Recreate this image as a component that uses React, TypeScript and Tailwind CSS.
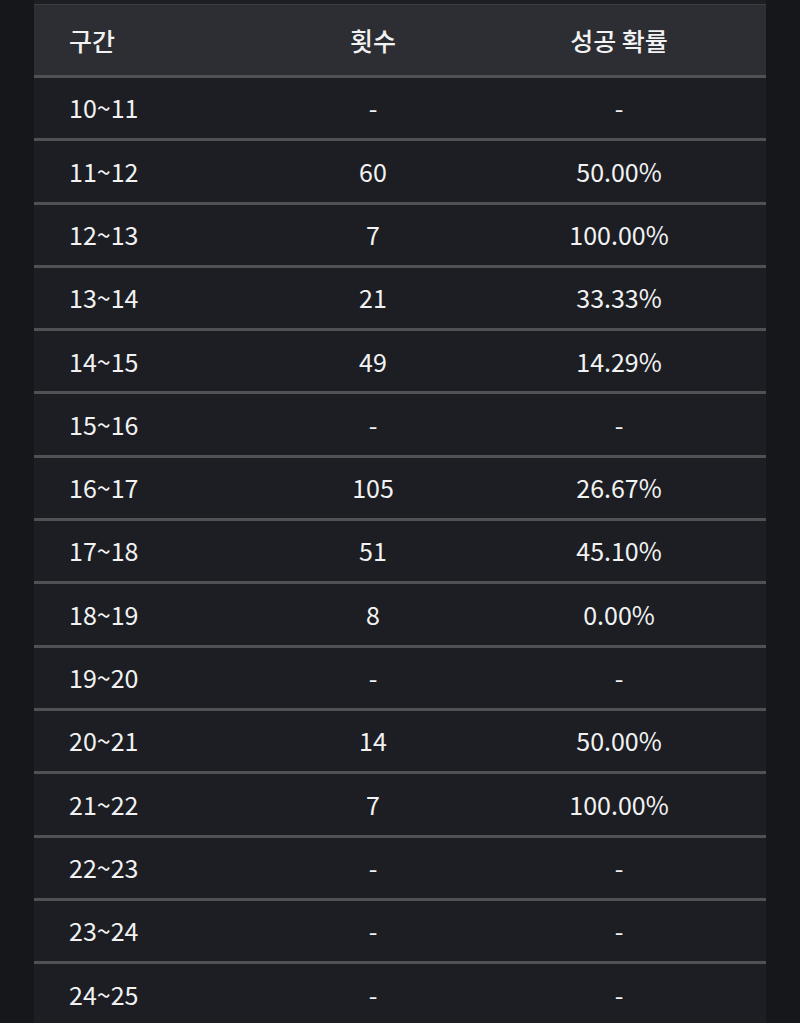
const rows: [string, string, string][] = [
  ["10~11", "-", "-"],
  ["11~12", "60", "50.00%"],
  ["12~13", "7", "100.00%"],
  ["13~14", "21", "33.33%"],
  ["14~15", "49", "14.29%"],
  ["15~16", "-", "-"],
  ["16~17", "105", "26.67%"],
  ["17~18", "51", "45.10%"],
  ["18~19", "8", "0.00%"],
  ["19~20", "-", "-"],
  ["20~21", "14", "50.00%"],
  ["21~22", "7", "100.00%"],
  ["22~23", "-", "-"],
  ["23~24", "-", "-"],
  ["24~25", "-", "-"],
]

export default function App() {
  return (
    <div
      className="min-h-[1023px] w-[800px] bg-[#16171a] px-[34px] overflow-hidden"
      style={{ fontFamily: '"Noto Sans CJK KR", "Noto Sans", sans-serif' }}
    >
      <div className="h-[1023px] overflow-hidden bg-[#1c1e24] text-[#f2f2f2] text-[25px]">
        <div className="h-[4px]" />
        <div className="grid grid-cols-[240px_198px_1fr] h-[74px] items-center bg-[#2c2e33] border-t border-[#3a3c40] border-b-[3px] border-b-[#505155] font-medium">
          <div className="pl-[35px] pt-[1px]">구간</div>
          <div className="text-center pt-[1px]">횟수</div>
          <div className="text-center pt-[1px]">성공 확률</div>
        </div>
        {rows.map(([range, count, rate]) => (
          <div
            key={range}
            className="grid grid-cols-[240px_198px_1fr] h-[63.3px] items-center border-b-[3px] border-[#505155]"
          >
            <div className="pl-[35px]">{range}</div>
            <div className="text-center">{count}</div>
            <div className="text-center">{rate}</div>
          </div>
        ))}
      </div>
    </div>
  )
}
